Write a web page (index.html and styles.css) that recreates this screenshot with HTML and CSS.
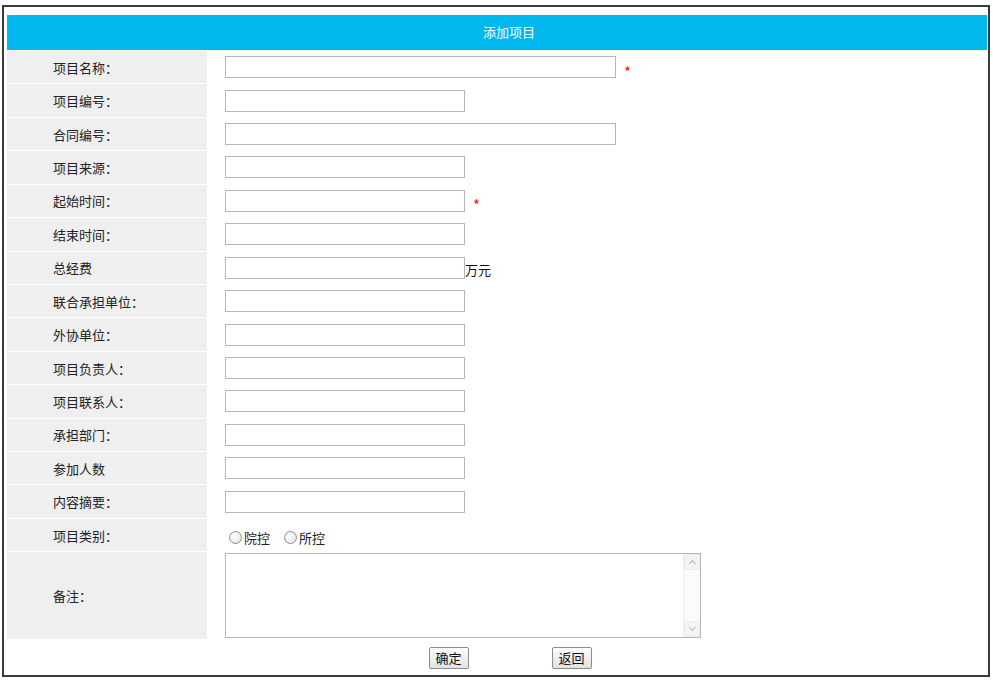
FILE: index.html
```html
<!DOCTYPE html>
<html lang="zh-CN">
<head>
  <meta charset="UTF-8" />
  <title>添加项目</title>
  <link rel="stylesheet" href="styles.css">
</head>
<body>
  <div class="frame">
    <form class="grid">
      <div class="head">添加项目</div>

      <div class="lab">项目名称：</div>
      <div class="val"><input type="text" class="long" /><span class="req">*</span></div>

      <div class="lab">项目编号：</div>
      <div class="val"><input type="text" /></div>

      <div class="lab">合同编号：</div>
      <div class="val"><input type="text" class="long" /></div>

      <div class="lab">项目来源：</div>
      <div class="val"><input type="text" /></div>

      <div class="lab">起始时间：</div>
      <div class="val"><input type="text" /><span class="req">*</span></div>

      <div class="lab">结束时间：</div>
      <div class="val"><input type="text" /></div>

      <div class="lab">总经费</div>
      <div class="val"><input type="text" /><span class="unit">万元</span></div>

      <div class="lab">联合承担单位：</div>
      <div class="val"><input type="text" /></div>

      <div class="lab">外协单位：</div>
      <div class="val"><input type="text" /></div>

      <div class="lab">项目负责人：</div>
      <div class="val"><input type="text" /></div>

      <div class="lab">项目联系人：</div>
      <div class="val"><input type="text" /></div>

      <div class="lab">承担部门：</div>
      <div class="val"><input type="text" /></div>

      <div class="lab">参加人数</div>
      <div class="val"><input type="text" /></div>

      <div class="lab">内容摘要：</div>
      <div class="val"><input type="text" /></div>

      <div class="lab">项目类别：</div>
      <div class="val radios">
        <label><input type="radio" name="kind" />院控</label>
        <label><input type="radio" name="kind" />所控</label>
      </div>

      <div class="lab">备注：</div>
      <div class="val">
        <div class="memo">
          <textarea></textarea>
          <!-- 模拟旧式滚动条 -->
          <div class="sbar">
            <span class="arrow up"></span>
            <span class="arrow down"></span>
          </div>
        </div>
      </div>

      <div class="foot">
        <button type="button">确定</button>
        <button type="button">返回</button>
      </div>
    </form>
  </div>
</body>
</html>
```

FILE: styles.css
```css
body {
  margin: 0;
  padding: 5px 0 0 2px;
  background: #fff;
  font-family: "Noto Sans CJK SC", "Liberation Sans", sans-serif;
  font-size: 13px;
  color: #333;
}
.frame {
  width: 980px;
  height: 660px;
  border: 2px solid #3a3a3a;
  padding: 8px 1px 0 3px;
  box-sizing: content-box;
}
.grid {
  margin: 0;
  display: grid;
  grid-template-columns: 200px 1fr;
  grid-template-rows: 35px repeat(15, 32.43px) 87px 34px;
  column-gap: 1px;
  row-gap: 1px;
}
.head {
  grid-column: 1 / 3;
  background: #00b7ee;
  color: #fff;
  display: flex;
  align-items: center;
  justify-content: center;
  padding-left: 24px;
  padding-bottom: 2px;
}
.lab {
  background: #efefef;
  display: flex;
  align-items: center;
  padding-left: 46px;
  color: #222;
}
.val {
  display: flex;
  align-items: center;
  padding-left: 17px;
}
input[type="text"] {
  width: 240px;
  height: 22px;
  box-sizing: border-box;
  border: 1px solid #b3b6ba;
  margin: 0;
  padding: 0 3px;
  font-size: 13px;
}
input.long {
  width: 391px;
}
.req {
  color: #e01818;
  font-size: 15px;
  margin-left: 8px;
  margin-top: 8px;
}
.unit {
  color: #111;
  margin-top: 4px;
}
.radios {
  gap: 14px;
  padding-top: 4px;
  padding-left: 21px;
}
.radios label {
  display: flex;
  align-items: center;
  color: #222;
}
input[type="radio"] {
  appearance: none;
  width: 13px;
  height: 13px;
  margin: 0 2px 0 0;
  border: 1px solid #8a8f95;
  border-radius: 50%;
  background: radial-gradient(circle at 40% 40%, #fff, #e0e0e0);
}
.memo {
  position: relative;
  width: 476px;
  height: 85px;
}
textarea {
  display: block;
  width: 100%;
  height: 100%;
  box-sizing: border-box;
  border: 1px solid #b3b6ba;
  margin: 0;
  padding: 2px 20px 2px 3px;
  resize: none;
}
.sbar {
  position: absolute;
  top: 1px;
  right: 1px;
  bottom: 1px;
  width: 16px;
  background: #fbfbfb;
  border-left: 1px solid #f0f0f0;
  display: flex;
  flex-direction: column;
  justify-content: space-between;
}
.arrow {
  height: 16px;
  background: #f4f4f4;
  border: 1px solid #ececec;
  box-sizing: border-box;
  position: relative;
}
.arrow::after {
  content: "";
  position: absolute;
  left: 5px;
  width: 4px;
  height: 4px;
  border-left: 1px solid #b0b8c0;
  border-top: 1px solid #b0b8c0;
}
.arrow.up::after {
  top: 6px;
  transform: rotate(45deg);
}
.arrow.down::after {
  top: 3px;
  transform: rotate(225deg);
}
.foot {
  grid-column: 1 / 3;
  display: flex;
  justify-content: center;
  align-items: center;
  gap: 83px;
  padding-left: 26px;
}
button {
  width: 40px;
  height: 22px;
  padding: 0;
  border: 1px solid #8c8c8c;
  border-radius: 2px;
  background: linear-gradient(#fdfdfd, #e2e2e2);
  font-family: inherit;
  font-size: 13px;
  color: #111;
  margin-top: 1px;
}
```
